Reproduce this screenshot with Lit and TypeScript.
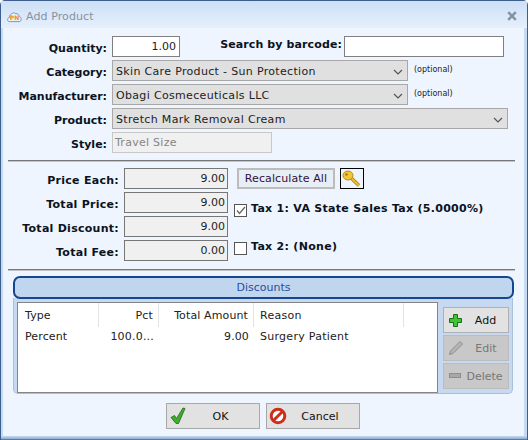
import { LitElement, html, css } from "lit";
import { customElement } from "lit/decorators.js";

const chevron = html`<svg class="chev" width="10" height="6" viewBox="0 0 10 6"><path d="M1 1l4 4 4-4" fill="none" stroke="#555" stroke-width="1.2"/></svg>`;

@customElement("app-root")
export class AppRoot extends LitElement {
  static styles = css`
    :host { display: block; width: 528px; height: 440px; font-family: "DejaVu Sans", Verdana, sans-serif; font-size: 11px; color: #111; overflow: hidden; }
    * { box-sizing: border-box; }
    .frame { width: 528px; height: 440px; background: #c6daf2; border: 1px solid #3c5f8e; border-width: 1px 1px 0 1px; border-radius: 5px 5px 0 0; display: flex; flex-direction: column; }
    .title { height: 27px; flex: none; display: flex; align-items: center; padding: 3px 10px 0 5px; gap: 3px; background: linear-gradient(#cddff6, #e6f0fc); color: #87929e; font-size: 11px; letter-spacing: 0.1px; }
    .title .grow { flex: 1; }
    .body { height: 408px; flex: none; margin: 0 3px 0 2px; background: #eef5fe; padding: 8px 0 0 0; display: flex; flex-direction: column; }
    .bottom { flex: 1; background: linear-gradient(#c6daf2, #9db8d8 60%, #3c5f8e); }
    .rows { display: flex; flex-direction: column; gap: 3px; }
    .row { display: flex; align-items: center; height: 21px; }
    .lbl { font-weight: 700; text-align: right; color: #0b1220; flex: none; white-space: nowrap; padding-top: 4px; }
    .top .lbl { width: 104px; margin-right: 5px; }
    .box { height: 21px; border: 1px solid #808080; background: #fff; display: flex; align-items: center; padding: 0 3px; flex: none; color: #222; }
    .right { justify-content: flex-end; }
    .qty { width: 68px; }
    .top .search-lbl { margin: 0 2px 0 40px; width: 122px; padding-top: 0; position: relative; top: -2px; letter-spacing: 0.11px; }
    .search { width: 160px; }
    .sel { background: #e0e0e0; border: 1px solid #a8a8a8; justify-content: space-between; padding-right: 4px; }
    .sel span { padding-top: 2px; letter-spacing: 0.33px; }
    .sel svg { margin-top: 2px; }
    .w296 { width: 296px; }
    .w396 { width: 396px; }
    .opt { font-size: 8px; margin: -2px 0 0 6px; color: #222; }
    .style { width: 160px; background: #f0f0f0; border: 1px solid #c8c8c8; color: #858585; padding-left: 2px; letter-spacing: 0.27px; }
    .rule { height: 2px; background: #777; border-bottom: 1px solid #c4c4c4; margin: 0 9px 0 5px; flex: none; }
    .rule1 { margin-top: 7px; }
    .rule2 { margin-top: 8px; }
    .money { display: flex; margin-top: 6px; }
    .money .col { display: flex; flex-direction: column; gap: 3px; }
    .money .lbl { width: 116px; margin-right: 5px; letter-spacing: 0.27px; }
    .num { width: 104px; background: #f0f0f0; border-color: #777; padding-right: 2px; }
    .side { display: flex; flex-direction: column; margin-left: 5px; }
    .btnrow { display: flex; align-items: flex-start; gap: 5px; height: 21px; margin-left: 4px; }
    .recalc { width: 98px; height: 21px; border: 2px solid #bcbcbc; background: #e8eef5; display: flex; align-items: center; justify-content: center; color: #301040; letter-spacing: 0.1px; }
    .key { width: 24px; height: 21px; border: 1px solid #000; display: flex; align-items: center; justify-content: center; }
    .tax { display: flex; align-items: center; gap: 4px; font-weight: 700; height: 14px; white-space: nowrap; color: #0b1220; letter-spacing: 0.29px; margin-left: 1px; }
    .tax span { margin-bottom: 4px; }
    .tax1 { margin-top: 14px; }
    .tax2 { margin-top: 24px; }
    .cb { width: 13px; height: 13px; border: 1px solid #555; background: #fff; flex: none; display: flex; align-items: center; justify-content: center; }
    .sec { margin: 5px 10px 0 10px; display: flex; flex-direction: column; }
    .sec-h { height: 23px; border: 2px solid #16468f; border-radius: 7px; background: #c0d6ef; color: #2e4c9a; display: flex; align-items: center; justify-content: center; position: relative; z-index: 1; }
    .sec-b { height: 96px; margin-top: -1px; background: #c6d9f0; border: 1px solid #a9c0dc; border-top: 0; border-radius: 0 0 5px 5px; padding: 4px 6px 0 3px; display: flex; gap: 5px; margin-right: 1px; }
    .table { width: 421px; height: 91px; border: 1px solid #858585; background: #fff; padding-top: 1px; flex: none; color: #222; }
    .tr { display: grid; grid-template-columns: 81px 60px 95px 150px; height: 24px; align-items: center; white-space: nowrap; }
    .tr.body-row { height: 18px; }
    .tr > div { padding: 0 5px 0 7px; height: 100%; display: flex; align-items: center; position: relative; top: -1px; letter-spacing: 0.12px; }
    .head > div { border-right: 1px solid #e3e3e3; }
    .tr .r { justify-content: flex-end; }
    .tr .pct { padding-right: 5px; padding-left: 0; letter-spacing: 0.2px; }
    .tr .reason { padding-left: 6px; letter-spacing: 0.27px; }
    .acts { display: flex; flex-direction: column; gap: 2px; margin-top: 5px; }
    .act { width: 66px; height: 26px; border: 1px solid #b0b0b0; background: #e2e2e2; display: flex; align-items: center; padding-left: 4px; color: #111; flex: none; }
    .act.off { background: #c8c8c8; color: #777; border-color: #bcbcbc; }
    .act.del { padding-left: 5px; }
    .act span { flex: 1; text-align: center; }
    .foot { display: flex; justify-content: center; gap: 6px; margin-top: 9px; padding-right: 1px; }
    .fbtn { width: 94px; height: 26px; border: 1px solid #a8a8a8; background: #e2e2e2; display: flex; align-items: center; padding-left: 2px; color: #111; }
    .fbtn span { flex: 1; text-align: center; padding-right: 6px; }
    .okicon { margin-left: 1px; }
  `;

  render() {
    return html`<div class="frame">
      <div class="title">
        <svg width="17" height="13" viewBox="0 0 18 14"><path d="M3.500 12.500C1 12.500 .8 8.500 3.500 8c0-3 4-6.500 7-4 2-.5 3.500 1 3.500 3 3 .5 3 5.500 0 5.500z" fill="#eaf1fa" stroke="#6f93b5"/><text x="4" y="11" font-size="6.500" font-weight="700" fill="#ee8a22" font-family="DejaVu Sans">PN</text></svg>
        <span>Add Product</span>
        <span class="grow"></span>
        <svg width="10" height="10" viewBox="0 0 10 10"><path d="M1.200 1.200l7.600 7.600M8.800 1.200l-7.600 7.600" stroke="#8493a3" stroke-width="2.400"/></svg>
      </div>
      <div class="body">
        <div class="rows top">
          <div class="row"><div class="lbl">Quantity:</div><div class="box right qty">1.00</div><div class="lbl search-lbl">Search by barcode:</div><div class="box search"></div></div>
          <div class="row"><div class="lbl">Category:</div><div class="box sel w296"><span>Skin Care Product - Sun Protection</span>${chevron}</div><div class="opt">(optional)</div></div>
          <div class="row"><div class="lbl">Manufacturer:</div><div class="box sel w296"><span>Obagi Cosmeceuticals LLC</span>${chevron}</div><div class="opt">(optional)</div></div>
          <div class="row"><div class="lbl">Product:</div><div class="box sel w396"><span>Stretch Mark Removal Cream</span>${chevron}</div></div>
          <div class="row"><div class="lbl">Style:</div><div class="box style"><span>Travel Size</span></div></div>
        </div>
        <div class="rule rule1"></div>
        <div class="money">
          <div class="col">
            ${[["Price Each:", "9.00"], ["Total Price:", "9.00"], ["Total Discount:", "9.00"], ["Total Fee:", "0.00"]].map(([l, v]) => html`<div class="row"><div class="lbl">${l}</div><div class="box right num"><span>${v}</span></div></div>`)}
          </div>
          <div class="side">
            <div class="btnrow">
              <div class="recalc">Recalculate All</div>
              <div class="key"><svg width="20" height="18" viewBox="0 0 20 18"><path d="M8 7l9 8.500" stroke="#a87412" stroke-width="3.400"/><path d="M8 7l9 8.500" stroke="#f0c12a" stroke-width="1.800"/><ellipse cx="6" cy="5.500" rx="5" ry="4.500" fill="#f2c636" stroke="#b88a18"/><circle cx="4.500" cy="4.500" r="1.200" fill="#a87412"/></svg></div>
            </div>
            <div class="tax tax1"><div class="cb"><svg width="11" height="11" viewBox="0 0 11 11"><path d="M2 5.500l2.500 3L10 2" fill="none" stroke="#666" stroke-width="1.300"/></svg></div><span>Tax 1: VA State Sales Tax (5.0000%)</span></div>
            <div class="tax tax2"><div class="cb"></div><span>Tax 2: (None)</span></div>
          </div>
        </div>
        <div class="rule rule2"></div>
        <div class="sec">
          <div class="sec-h">Discounts</div>
          <div class="sec-b">
            <div class="table">
              <div class="tr head"><div>Type</div><div class="r pct">Pct</div><div class="r">Total Amount</div><div class="reason">Reason</div></div>
              <div class="tr body-row"><div>Percent</div><div class="r pct">100.0...</div><div class="r">9.00</div><div class="reason">Surgery Patient</div></div>
            </div>
            <div class="acts">
              <div class="act"><svg width="15" height="15" viewBox="0 0 15 15"><path d="M5.500 1.500h4v4h4v4h-4v4h-4v-4h-4v-4h4z" fill="#3fc436" stroke="#1c6d18"/></svg><span>Add</span></div>
              <div class="act off"><svg width="16" height="16" viewBox="0 0 16 16"><path d="M1.500 14.500l1-3.500 9.500-9.500 2.500 2.500-9.500 9.500z" fill="#b4b4b4" stroke="#8e8e8e"/></svg><span>Edit</span></div>
              <div class="act off del"><svg width="12" height="6" viewBox="0 0 12 6"><rect x=".5" y=".5" width="11" height="4" fill="#a8a8a8" stroke="#8e8e8e"/></svg><span>Delete</span></div>
            </div>
          </div>
        </div>
        <div class="foot">
          <div class="fbtn"><svg class="okicon" width="18" height="18" viewBox="0 0 18 18"><path d="M1 10.500l3.500-2 2 3 6.500-10.500 2 .5-6.500 15h-2.500z" fill="#3fae2a" stroke="#1e6a17" stroke-width=".8"/></svg><span>OK</span></div>
          <div class="fbtn"><svg width="18" height="18" viewBox="0 0 18 18"><circle cx="9" cy="9" r="6.800" fill="#fff" stroke="#cc2e1a" stroke-width="3"/><path d="M4.500 13.500l9-9" stroke="#cc2e1a" stroke-width="3"/></svg><span>Cancel</span></div>
        </div>
      </div>
      <div class="bottom"></div>
    </div>`;
  }
}
